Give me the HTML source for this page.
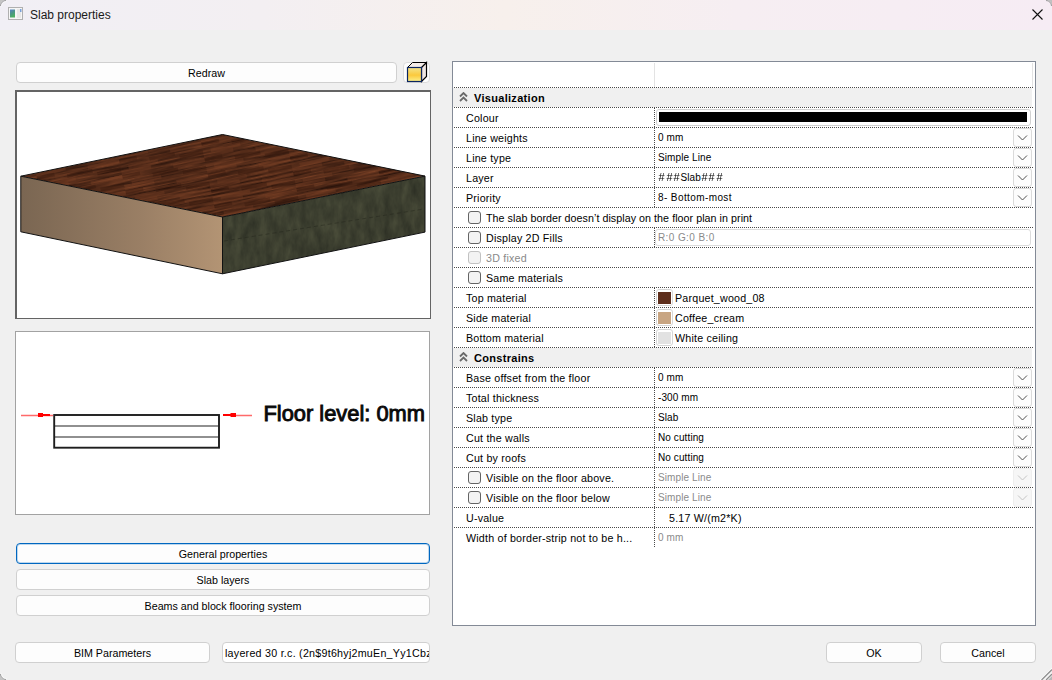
<!DOCTYPE html>
<html><head><meta charset="utf-8">
<style>
*{box-sizing:border-box;margin:0;padding:0}
html,body{width:1052px;height:680px;overflow:hidden}
body{position:relative;background:#f0f0f0;font-family:"Liberation Sans",sans-serif;color:#000}
.a{position:absolute}
#title{left:0;top:0;width:1052px;height:30px;background:linear-gradient(90deg,#f1eff5 0%,#f3eff2 25%,#f7f0ec 48%,#f6eef2 70%,#f6ecf4 100%)}
#ttxt{left:30px;top:8px;font-size:12px;line-height:14px;color:#1a1a1a}
.btn{position:absolute;background:#fdfdfd;border:1px solid #d0d0d0;border-radius:4px;font-size:10.7px;line-height:20px;text-align:center;color:#000}
.prev{position:absolute;background:#fff}
.grid{left:452px;top:61px;width:584px;height:565px;background:#fff;border:1px solid #838a96}
.hl{position:absolute;height:1px;background:repeating-linear-gradient(90deg,#4a4a4a 0 1px,transparent 1px 2px)}
.vl{position:absolute;width:1px;background:repeating-linear-gradient(180deg,#4a4a4a 0 1px,transparent 1px 2px)}
.lab{position:absolute;font-size:10.7px;line-height:13px;color:#000;white-space:nowrap;letter-spacing:0.2px}
.val{position:absolute;font-size:10px;line-height:12px;color:#000;white-space:nowrap;letter-spacing:0.1px}
.dis{color:#8a8a8a}
.hs{display:inline-block;width:7.5px;text-align:center;font-style:normal;transform:scaleX(1.1)}
.dd{position:absolute;left:561px;width:19px;height:19px;border:1px solid #dadada;border-radius:3px;background:#fcfcfc}
.dd svg{position:absolute;left:3px;top:6px}
.cb{position:absolute;width:13px;height:13px;border:1px solid #666;border-radius:3px;background:#f3f3f3}
.grp{position:absolute;left:0;width:580px;height:19px;background:#f0f0f0}
.grp b{position:absolute;left:21px;top:3px;font-size:11px;line-height:13px}
.sw{position:absolute;left:204px;width:17px;height:17px;border:1px solid #d4d4d4;border-radius:3px;background:#fff}
.sw i{position:absolute;left:2px;top:2px;width:11px;height:11px}
</style></head><body>
<div id="title" class="a">
  <svg class="a" style="left:8px;top:7px" width="15" height="13" viewBox="0 0 15 13">
    <defs><linearGradient id="ig" x1="0" y1="0" x2="0.4" y2="1"><stop offset="0" stop-color="#5a82c8"/><stop offset="0.5" stop-color="#4a9488"/><stop offset="1" stop-color="#4cb060"/></linearGradient></defs>
    <rect x="0.5" y="0.5" width="14" height="12" fill="#f6f6f6" stroke="#b0b0b0"/>
    <rect x="2" y="2.5" width="5" height="8" fill="url(#ig)"/>
    <rect x="9" y="2" width="4" height="9" fill="#e8e8e8"/>
    <rect x="12" y="2" width="1.5" height="3" fill="#7aa0d8"/>
  </svg>
  <div id="ttxt" class="a">Slab properties</div>
  <svg class="a" style="left:1032px;top:9px" width="11" height="11" viewBox="0 0 11 11"><path d="M0.5 0.5L10.5 10.5M10.5 0.5L0.5 10.5" stroke="#111" stroke-width="1.1"/></svg>
</div>

<!-- left panel -->
<div class="btn" style="left:16px;top:62px;width:381px;height:21px">Redraw</div>
<div class="btn" style="left:403px;top:62px;width:27px;height:21px;border-color:#dcdcdc"></div>
<svg class="a" style="left:400px;top:58px" width="32" height="28" viewBox="400 58 32 28">
  <defs><linearGradient id="yg" x1="0" y1="0" x2="0" y2="1"><stop offset="0" stop-color="#f3e48c"/><stop offset="0.55" stop-color="#fbc93c"/><stop offset="1" stop-color="#fbf08c"/></linearGradient></defs>
  <path d="M407.5 67.5L412.5 62.5L426.5 62.5L421.5 67.5Z" fill="#f4ece8" stroke="#000" stroke-width="1"/>
  <path d="M421.5 67.5L426.5 62.5L426.5 76.5L421.5 81.5Z" fill="#efe6e2" stroke="#000" stroke-width="1.2"/>
  <rect x="407.5" y="67.5" width="14" height="14" fill="url(#yg)" stroke="#0c2660" stroke-width="1.2"/>
</svg>
<div class="prev" style="left:15px;top:90px;width:416px;height:229px;border:2px solid #646464;border-right-width:1px;border-bottom-width:1px"></div>
<svg class="a" style="left:17px;top:92px" width="413" height="226" viewBox="17 92 413 226">
  <defs>
    <linearGradient id="lf" x1="0" y1="0" x2="1" y2="0"><stop offset="0" stop-color="#7a6652"/><stop offset="0.6" stop-color="#9a7f65"/><stop offset="1" stop-color="#b39474"/></linearGradient>
    <pattern id="plank" patternUnits="userSpaceOnUse" width="84" height="16" patternTransform="rotate(-11.7)">
      <rect x="0" y="0" width="30" height="4" fill="#7a3f24"/><rect x="52" y="4" width="32" height="4" fill="#7a3f24"/>
      <rect x="30" y="8" width="26" height="4" fill="#2e1208"/><rect x="8" y="12" width="30" height="4" fill="#7a3f24"/>
      <rect x="60" y="12" width="24" height="4" fill="#2e1208"/><rect x="0" y="4" width="18" height="4" fill="#2e1208"/>
    </pattern>
    <clipPath id="ctop"><path d="M20.8 176.2L222.5 134.5L425 176.1L222.5 217Z"/></clipPath>
    <clipPath id="crt"><path d="M222.5 217L425 176.1L425 232.1L222.5 273.8Z"/></clipPath>
    <filter id="woodf" x="0" y="0" width="1" height="1" filterUnits="objectBoundingBox" color-interpolation-filters="sRGB"><feTurbulence type="fractalNoise" baseFrequency="0.02 0.5" numOctaves="4" seed="7"/><feColorMatrix type="matrix" values="0.5 0 0 0 0.07  0.28 0 0 0 0.025  0.16 0 0 0 0.015  0 0 0 0 1"/></filter>
    <filter id="concf" x="0" y="0" width="1" height="1" filterUnits="objectBoundingBox" color-interpolation-filters="sRGB"><feTurbulence type="fractalNoise" baseFrequency="0.12 0.05" numOctaves="4" seed="11"/><feColorMatrix type="matrix" values="0.14 0 0 0 0.165  0.14 0 0 0 0.175  0.1 0 0 0 0.135  0 0 0 0 1"/></filter>
  </defs>
  <g clip-path="url(#ctop)"><rect x="0" y="60" width="460" height="200" filter="url(#woodf)" transform="rotate(-11.7 222 176)"/><rect x="17" y="130" width="413" height="90" fill="url(#plank)" opacity="0.3"/></g>
  <g clip-path="url(#crt)"><rect x="215" y="170" width="215" height="110" filter="url(#concf)"/>
    <path d="M224 241L424 209" stroke="#25271c" stroke-width="0.9" stroke-dasharray="4 3" fill="none" opacity="0.55"/></g>
  <path d="M20.8 176.2L222.5 217L222.5 273.8L20.8 231.8Z" fill="url(#lf)"/>
  <path d="M20.8 176.2L222.5 134.5L425 176.1L222.5 217ZM20.8 176.2V231.8L222.5 273.8L425 232.1V176.1M222.5 217V273.8" fill="none" stroke="#111" stroke-width="1"/>
</svg>
<div class="prev" style="left:15px;top:331px;width:415px;height:184px;border:1px solid #a2a2a2"></div>
<svg class="a" style="left:16px;top:332px" width="413" height="182" viewBox="16 332 413 182">
  <path d="M21 415.5H53M236 415.5H252" stroke="#ff6a6a" stroke-width="1.4"/>
  <path d="M42 415H50M223 415H231" stroke="#ff0000" stroke-width="2"/>
  <rect x="38" y="413" width="5" height="4" fill="#f00"/>
  <rect x="230.5" y="413" width="5.5" height="4" fill="#f00"/>
  <path d="M54.5 426H218.5M54.5 437H218.5" stroke="#6c6c6c" stroke-width="1.5"/>
  <rect x="54.2" y="415" width="164.8" height="32.7" fill="none" stroke="#1e1e1e" stroke-width="1.9"/>
  <text x="263.5" y="421.2" font-family="Liberation Sans" font-size="21.85" fill="#0a0a0a" stroke="#0a0a0a" stroke-width="0.9">Floor level: 0mm</text>
</svg>

<div class="btn" style="left:16px;top:543px;width:414px;height:21px;border:1px solid #0067c0;box-shadow:inset 0 0 0 1px rgba(0,103,192,0.25)">General properties</div>
<div class="btn" style="left:16px;top:569px;width:414px;height:21px">Slab layers</div>
<div class="btn" style="left:16px;top:595px;width:414px;height:21px">Beams and block flooring system</div>
<div class="btn" style="left:15px;top:642px;width:195px;height:21px">BIM Parameters</div>
<div class="btn" style="left:222px;top:642px;width:208px;height:21px;text-align:left;padding-left:2px;overflow:hidden;white-space:nowrap;background:#fff;letter-spacing:0.25px">layered 30 r.c. (2n$9t6hyj2muEn_Yy1Cbzł</div>

<div class="btn" style="left:826px;top:642px;width:96px;height:21px">OK</div>
<div class="btn" style="left:940px;top:642px;width:96px;height:21px">Cancel</div>

<!-- grid -->
<div class="grid a" id="grid"></div>
<!--GRID-->
<div class="a" style="left:654px;top:63px;width:1px;height:24px;background:#e3e3e3"></div>
<div class="a" style="left:1032px;top:63px;width:1px;height:24px;background:#e3e3e3"></div>
<div class="hl" style="left:454px;top:87px;width:579px"></div>
<div class="a" style="left:453px;top:88px;width:579px;height:19px;background:#f0f0f0"><svg class="a" style="left:6px;top:4px" width="9" height="10" viewBox="0 0 9 10"><path d="M1 4.5L4.5 1L8 4.5M1 9L4.5 5.5L8 9" fill="none" stroke="#6a6a6a" stroke-width="1.8"/></svg><b class="a" style="left:21px;top:4px;font-size:11px;line-height:13px;letter-spacing:0.3px">Visualization</b></div>
<div class="hl" style="left:454px;top:107px;width:579px"></div>
<div class="vl" style="left:654px;top:108px;height:19px"></div>
<div class="lab" style="left:466px;top:112px">Colour</div>
<div class="a" style="left:656px;top:109px;width:375px;height:17px;border:1px solid #d2d2d2;border-radius:3px;background:#fff"></div>
<div class="a" style="left:659px;top:112px;width:368px;height:10px;background:#000"></div>
<div class="hl" style="left:454px;top:127px;width:579px"></div>
<div class="vl" style="left:654px;top:128px;height:19px"></div>
<div class="lab" style="left:466px;top:132px">Line weights</div>
<div class="val" style="left:658px;top:132px">0 mm</div>
<div class="dd" style="left:1013px;top:128px;border-color:#dadada;background:#fcfcfc"><svg width="11" height="6" viewBox="0 0 11 6"><path d="M1 0.5L5.5 5L10 0.5" fill="none" stroke="#505050" stroke-width="1"/></svg></div>
<div class="hl" style="left:454px;top:147px;width:579px"></div>
<div class="vl" style="left:654px;top:148px;height:19px"></div>
<div class="lab" style="left:466px;top:152px">Line type</div>
<div class="val" style="left:658px;top:152px">Simple Line</div>
<div class="dd" style="left:1013px;top:148px;border-color:#dadada;background:#fcfcfc"><svg width="11" height="6" viewBox="0 0 11 6"><path d="M1 0.5L5.5 5L10 0.5" fill="none" stroke="#505050" stroke-width="1"/></svg></div>
<div class="hl" style="left:454px;top:167px;width:579px"></div>
<div class="vl" style="left:654px;top:168px;height:19px"></div>
<div class="lab" style="left:466px;top:172px">Layer</div>
<div class="val" style="left:658px;top:172px"><i class="hs">#</i><i class="hs">#</i><i class="hs">#</i>Slab<i class="hs">#</i><i class="hs">#</i><i class="hs">#</i></div>
<div class="dd" style="left:1013px;top:168px;border-color:#dadada;background:#fcfcfc"><svg width="11" height="6" viewBox="0 0 11 6"><path d="M1 0.5L5.5 5L10 0.5" fill="none" stroke="#505050" stroke-width="1"/></svg></div>
<div class="hl" style="left:454px;top:187px;width:579px"></div>
<div class="vl" style="left:654px;top:188px;height:19px"></div>
<div class="lab" style="left:466px;top:192px">Priority</div>
<div class="val" style="left:658px;top:192px"><span style="letter-spacing:0.4px">8- Bottom-most</span></div>
<div class="dd" style="left:1013px;top:188px;border-color:#dadada;background:#fcfcfc"><svg width="11" height="6" viewBox="0 0 11 6"><path d="M1 0.5L5.5 5L10 0.5" fill="none" stroke="#505050" stroke-width="1"/></svg></div>
<div class="hl" style="left:454px;top:207px;width:579px"></div>
<div class="cb" style="left:468px;top:211px;border-color:#646464"></div>
<div class="lab" style="left:486px;top:212px"><span style="letter-spacing:0.05px">The slab border doesn’t display on the floor plan in print</span></div>
<div class="hl" style="left:454px;top:227px;width:579px"></div>
<div class="vl" style="left:654px;top:228px;height:19px"></div>
<div class="cb" style="left:468px;top:231px;border-color:#646464"></div>
<div class="lab" style="left:486px;top:232px">Display 2D Fills</div>
<div class="a" style="left:655px;top:229px;width:376px;height:17px;border:1px solid #dcdcdc;border-radius:3px;background:#fff"></div>
<div class="val dis" style="left:658px;top:232px;letter-spacing:0.4px">R:0 G:0 B:0</div>
<div class="hl" style="left:454px;top:247px;width:579px"></div>
<div class="cb" style="left:468px;top:251px;border-color:#c2c2c2"></div>
<div class="lab dis" style="left:486px;top:252px">3D fixed</div>
<div class="hl" style="left:454px;top:267px;width:579px"></div>
<div class="cb" style="left:468px;top:271px;border-color:#646464"></div>
<div class="lab" style="left:486px;top:272px">Same materials</div>
<div class="hl" style="left:454px;top:287px;width:579px"></div>
<div class="vl" style="left:654px;top:288px;height:19px"></div>
<div class="lab" style="left:466px;top:292px">Top material</div>
<div class="a" style="left:656px;top:289px;width:17px;height:17px;border:1px solid #d6d6d6;border-radius:3px;background:#fff"><i class="a" style="left:1px;top:1.5px;width:13px;height:12px;background:#5e2e1c"></i></div>
<div class="lab" style="left:675px;top:292px">Parquet_wood_08</div>
<div class="hl" style="left:454px;top:307px;width:579px"></div>
<div class="vl" style="left:654px;top:308px;height:19px"></div>
<div class="lab" style="left:466px;top:312px">Side material</div>
<div class="a" style="left:656px;top:309px;width:17px;height:17px;border:1px solid #d6d6d6;border-radius:3px;background:#fff"><i class="a" style="left:1px;top:1.5px;width:13px;height:12px;background:#c8a582"></i></div>
<div class="lab" style="left:675px;top:312px">Coffee_cream</div>
<div class="hl" style="left:454px;top:327px;width:579px"></div>
<div class="vl" style="left:654px;top:328px;height:19px"></div>
<div class="lab" style="left:466px;top:332px">Bottom material</div>
<div class="a" style="left:656px;top:329px;width:17px;height:17px;border:1px solid #d6d6d6;border-radius:3px;background:#fff"><i class="a" style="left:1px;top:1.5px;width:13px;height:12px;background:#e2e2e2"></i></div>
<div class="lab" style="left:675px;top:332px">White ceiling</div>
<div class="hl" style="left:454px;top:347px;width:579px"></div>
<div class="a" style="left:453px;top:348px;width:579px;height:19px;background:#f0f0f0"><svg class="a" style="left:6px;top:4px" width="9" height="10" viewBox="0 0 9 10"><path d="M1 4.5L4.5 1L8 4.5M1 9L4.5 5.5L8 9" fill="none" stroke="#6a6a6a" stroke-width="1.8"/></svg><b class="a" style="left:21px;top:4px;font-size:11px;line-height:13px;letter-spacing:0.3px">Constrains</b></div>
<div class="hl" style="left:454px;top:367px;width:579px"></div>
<div class="vl" style="left:654px;top:368px;height:19px"></div>
<div class="lab" style="left:466px;top:372px">Base offset from the floor</div>
<div class="val" style="left:658px;top:372px">0 mm</div>
<div class="dd" style="left:1013px;top:368px;border-color:#dadada;background:#fcfcfc"><svg width="11" height="6" viewBox="0 0 11 6"><path d="M1 0.5L5.5 5L10 0.5" fill="none" stroke="#505050" stroke-width="1"/></svg></div>
<div class="hl" style="left:454px;top:387px;width:579px"></div>
<div class="vl" style="left:654px;top:388px;height:19px"></div>
<div class="lab" style="left:466px;top:392px">Total thickness</div>
<div class="val" style="left:658px;top:392px">-300 mm</div>
<div class="dd" style="left:1013px;top:388px;border-color:#dadada;background:#fcfcfc"><svg width="11" height="6" viewBox="0 0 11 6"><path d="M1 0.5L5.5 5L10 0.5" fill="none" stroke="#505050" stroke-width="1"/></svg></div>
<div class="hl" style="left:454px;top:407px;width:579px"></div>
<div class="vl" style="left:654px;top:408px;height:19px"></div>
<div class="lab" style="left:466px;top:412px">Slab type</div>
<div class="val" style="left:658px;top:412px">Slab</div>
<div class="dd" style="left:1013px;top:408px;border-color:#dadada;background:#fcfcfc"><svg width="11" height="6" viewBox="0 0 11 6"><path d="M1 0.5L5.5 5L10 0.5" fill="none" stroke="#505050" stroke-width="1"/></svg></div>
<div class="hl" style="left:454px;top:427px;width:579px"></div>
<div class="vl" style="left:654px;top:428px;height:19px"></div>
<div class="lab" style="left:466px;top:432px">Cut the walls</div>
<div class="val" style="left:658px;top:432px">No cutting</div>
<div class="dd" style="left:1013px;top:428px;border-color:#dadada;background:#fcfcfc"><svg width="11" height="6" viewBox="0 0 11 6"><path d="M1 0.5L5.5 5L10 0.5" fill="none" stroke="#505050" stroke-width="1"/></svg></div>
<div class="hl" style="left:454px;top:447px;width:579px"></div>
<div class="vl" style="left:654px;top:448px;height:19px"></div>
<div class="lab" style="left:466px;top:452px">Cut by roofs</div>
<div class="val" style="left:658px;top:452px">No cutting</div>
<div class="dd" style="left:1013px;top:448px;border-color:#dadada;background:#fcfcfc"><svg width="11" height="6" viewBox="0 0 11 6"><path d="M1 0.5L5.5 5L10 0.5" fill="none" stroke="#505050" stroke-width="1"/></svg></div>
<div class="hl" style="left:454px;top:467px;width:579px"></div>
<div class="vl" style="left:654px;top:468px;height:19px"></div>
<div class="cb" style="left:468px;top:471px;border-color:#646464"></div>
<div class="lab" style="left:486px;top:472px">Visible on the floor above.</div>
<div class="val dis" style="left:658px;top:472px">Simple Line</div>
<div class="dd" style="left:1013px;top:468px;border-color:#eeeeee;background:#f6f6f6"><svg width="11" height="6" viewBox="0 0 11 6"><path d="M1 0.5L5.5 5L10 0.5" fill="none" stroke="#c4c4c4" stroke-width="1"/></svg></div>
<div class="hl" style="left:454px;top:487px;width:579px"></div>
<div class="vl" style="left:654px;top:488px;height:19px"></div>
<div class="cb" style="left:468px;top:491px;border-color:#646464"></div>
<div class="lab" style="left:486px;top:492px">Visible on the floor below</div>
<div class="val dis" style="left:658px;top:492px">Simple Line</div>
<div class="dd" style="left:1013px;top:488px;border-color:#eeeeee;background:#f6f6f6"><svg width="11" height="6" viewBox="0 0 11 6"><path d="M1 0.5L5.5 5L10 0.5" fill="none" stroke="#c4c4c4" stroke-width="1"/></svg></div>
<div class="hl" style="left:454px;top:507px;width:579px"></div>
<div class="vl" style="left:654px;top:508px;height:19px"></div>
<div class="lab" style="left:466px;top:512px">U-value</div>
<div class="lab" style="left:669px;top:512px">5.17 W/(m2*K)</div>
<div class="hl" style="left:454px;top:527px;width:579px"></div>
<div class="vl" style="left:654px;top:528px;height:19px"></div>
<div class="lab" style="left:466px;top:532px">Width of border-strip not to be h...</div>
<div class="val dis" style="left:658px;top:532px">0 mm</div>
<!--/GRID-->
<svg class="a" style="left:0;top:0" width="10" height="10" viewBox="0 0 10 10"><path d="M0 0H6A6 6 0 0 0 0 6Z" fill="#c4c4c4"/><path d="M6 0.5A5.5 5.5 0 0 0 0.5 6" fill="none" stroke="#9a9a9a" stroke-width="1"/><path d="M6.5 1.5A5 5 0 0 0 1.5 6.5" fill="none" stroke="#fff" stroke-width="1" opacity="0.6"/></svg>
<svg class="a" style="left:1042px;top:0" width="10" height="10" viewBox="0 0 10 10"><path d="M10 0H4A6 6 0 0 1 10 6Z" fill="#c0c0c0"/><path d="M4 0.5A5.5 5.5 0 0 1 9.5 6" fill="none" stroke="#9a9a9a" stroke-width="1"/></svg>
<svg class="a" style="left:0;top:670px" width="10" height="10" viewBox="0 0 10 10"><path d="M0 10H6A6 6 0 0 1 0 4Z" fill="#c4c4c4"/><path d="M6 9.5A5.5 5.5 0 0 1 0.5 4" fill="none" stroke="#9a9a9a" stroke-width="1"/><path d="M6.5 8.5A5 5 0 0 1 1.5 3.5" fill="none" stroke="#fff" stroke-width="1" opacity="0.6"/></svg>
<svg class="a" style="left:1036px;top:664px" width="16" height="16" viewBox="0 0 16 16"><path d="M4.5 16L16 4.5" stroke="#fff" stroke-width="1.2"/><path d="M5.5 16L16 5.5" stroke="#8e8e8e" stroke-width="1.3"/><path d="M9 16L16 9" stroke="#fff" stroke-width="1.2"/><path d="M10 16L16 10" stroke="#8e8e8e" stroke-width="1.3"/><path d="M12 16L16 12V16Z" fill="#b8b8b8"/></svg>
</body></html>
